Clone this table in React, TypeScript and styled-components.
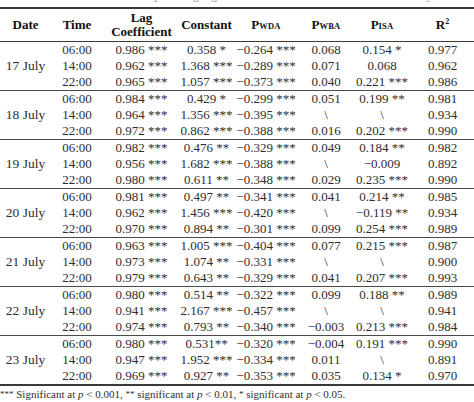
import React from "react";
import styled, { createGlobalStyle } from "styled-components";

const GlobalStyle = createGlobalStyle`
  html, body {
    margin: 0;
    padding: 0;
    background: #ffffff;
  }
  body {
    font-family: "Liberation Serif", "Times New Roman", serif;
    color: #2a2a2a;
  }
`;

interface Row {
  time: string;
  lag: string;
  constant: string;
  pwda: string;
  pwba: string;
  pisa: string;
  r2: string;
}

interface Group {
  date: string;
  rows: Row[];
}

const r = (time: string, lag: string, constant: string, pwda: string, pwba: string, pisa: string, r2: string): Row => ({
  time, lag, constant, pwda, pwba, pisa, r2,
});

const groups: Group[] = [
  { date: "17 July", rows: [
    r("06:00", "0.986 ***", "0.358 *", "\u22120.264 ***", "0.068", "0.154 *", "0.977"),
    r("14:00", "0.962 ***", "1.368 ***", "\u22120.289 ***", "0.071", "0.068", "0.962"),
    r("22:00", "0.965 ***", "1.057 ***", "\u22120.373 ***", "0.040", "0.221 ***", "0.986"),
  ] },
  { date: "18 July", rows: [
    r("06:00", "0.984 ***", "0.429 *", "\u22120.299 ***", "0.051", "0.199 **", "0.981"),
    r("14:00", "0.964 ***", "1.356 ***", "\u22120.395 ***", "\\", "\\", "0.934"),
    r("22:00", "0.972 ***", "0.862 ***", "\u22120.388 ***", "0.016", "0.202 ***", "0.990"),
  ] },
  { date: "19 July", rows: [
    r("06:00", "0.982 ***", "0.476 **", "\u22120.329 ***", "0.049", "0.184 **", "0.982"),
    r("14:00", "0.956 ***", "1.682 ***", "\u22120.388 ***", "\\", "\u22120.009", "0.892"),
    r("22:00", "0.980 ***", "0.611 **", "\u22120.348 ***", "0.029", "0.235 ***", "0.990"),
  ] },
  { date: "20 July", rows: [
    r("06:00", "0.981 ***", "0.497 **", "\u22120.341 ***", "0.041", "0.214 **", "0.985"),
    r("14:00", "0.962 ***", "1.456 ***", "\u22120.420 ***", "\\", "\u22120.119 **", "0.934"),
    r("22:00", "0.970 ***", "0.894 **", "\u22120.301 ***", "0.099", "0.254 ***", "0.989"),
  ] },
  { date: "21 July", rows: [
    r("06:00", "0.963 ***", "1.005 ***", "\u22120.404 ***", "0.077", "0.215 ***", "0.987"),
    r("14:00", "0.973 ***", "1.074 **", "\u22120.331 ***", "\\", "\\", "0.900"),
    r("22:00", "0.979 ***", "0.643 **", "\u22120.329 ***", "0.041", "0.207 ***", "0.993"),
  ] },
  { date: "22 July", rows: [
    r("06:00", "0.980 ***", "0.514 **", "\u22120.322 ***", "0.099", "0.188 **", "0.989"),
    r("14:00", "0.941 ***", "2.167 ***", "\u22120.457 ***", "\\", "\\", "0.941"),
    r("22:00", "0.974 ***", "0.793 **", "\u22120.340 ***", "\u22120.003", "0.213 ***", "0.984"),
  ] },
  { date: "23 July", rows: [
    r("06:00", "0.980 ***", "0.531**", "\u22120.320 ***", "\u22120.004", "0.191 ***", "0.990"),
    r("14:00", "0.947 ***", "1.952 ***", "\u22120.334 ***", "0.011", "\\", "0.891"),
    r("22:00", "0.969 ***", "0.927 **", "\u22120.353 ***", "0.035", "0.134 *", "0.970"),
  ] },
];

const colWidths = [51, 52, 77, 53, 66, 54, 58, 63];

const Page = styled.div`
  width: 474px;
`;

// only the descenders of the caption line above the table show in the shot
const CaptionStrip = styled.div`
  height: 7px;
  overflow: hidden;
  text-align: center;
`;

const Caption = styled.div`
  margin-top: -12px;
  font-size: 12px;
  line-height: 14px;
  color: #9a9a9a;
  white-space: nowrap;
`;

const Table = styled.table`
  width: 474px;
  border-collapse: collapse;
  table-layout: fixed;
  font-size: 13px;
  border-top: 2px solid #3a3a3a;
  border-bottom: 2px solid #3a3a3a;
`;

const HeadCell = styled.th`
  height: 32px;
  padding: 0;
  font-weight: bold;
  color: #111;
  text-align: center;
  line-height: 14px;
  vertical-align: middle;
  border-bottom: 1.5px solid #3a3a3a;
`;

const Sub = styled.span`
  font-size: 8.5px;
  letter-spacing: 0.2px;
`;

const Sup = styled.sup`
  font-size: 8px;
  line-height: 0;
`;

const BodyRow = styled.tr<{ $first: boolean }>`
  height: 16px;
  border-top: ${(p) => (p.$first ? "1px solid #4a4a4a" : "none")};
`;

const Cell = styled.td`
  padding: 0;
  height: 16px;
  line-height: 16px;
  text-align: center;
  white-space: nowrap;
  color: #2e2e2e;
`;

const DateCell = styled.td`
  padding: 0;
  text-align: center;
  vertical-align: middle;
  white-space: nowrap;
  color: #2e2e2e;
  font-size: 13.5px;
`;

const Footnote = styled.div`
  font-size: 11px;
  line-height: 17px;
  color: #2e2e2e;
  white-space: nowrap;
`;

const Stars = styled.span`
  font-size: 9px;
  vertical-align: 1px;
`;

const P = styled.i``;

export default function App() {
  return (
    <Page>
      <GlobalStyle />
      <CaptionStrip>
        <Caption>Table 4. Results of the spatial lag regression model for the urban heat island study.</Caption>
      </CaptionStrip>
      <Table>
        <colgroup>
          {colWidths.map((w, i) => (
            <col key={i} style={{ width: w }} />
          ))}
        </colgroup>
        <thead>
          <tr>
            <HeadCell>Date</HeadCell>
            <HeadCell>Time</HeadCell>
            <HeadCell>Lag<br />Coefficient</HeadCell>
            <HeadCell>Constant</HeadCell>
            <HeadCell>P<Sub>WDA</Sub></HeadCell>
            <HeadCell>P<Sub>WBA</Sub></HeadCell>
            <HeadCell>P<Sub>ISA</Sub></HeadCell>
            <HeadCell>R<Sup>2</Sup></HeadCell>
          </tr>
        </thead>
        <tbody>
          {groups.map((g) =>
            g.rows.map((row, i) => (
              <BodyRow key={g.date + row.time} $first={i === 0}>
                {i === 0 ? <DateCell rowSpan={3}>{g.date}</DateCell> : null}
                <Cell>{row.time}</Cell>
                <Cell>{row.lag}</Cell>
                <Cell>{row.constant}</Cell>
                <Cell>{row.pwda}</Cell>
                <Cell>{row.pwba}</Cell>
                <Cell>{row.pisa}</Cell>
                <Cell>{row.r2}</Cell>
              </BodyRow>
            ))
          )}
        </tbody>
      </Table>
      <Footnote>
        <Stars>***</Stars> Significant at <P>p</P> &lt; 0.001, <Stars>**</Stars> significant at <P>p</P> &lt; 0.01,{" "}
        <Stars>*</Stars> significant at <P>p</P> &lt; 0.05.
      </Footnote>
    </Page>
  );
}
